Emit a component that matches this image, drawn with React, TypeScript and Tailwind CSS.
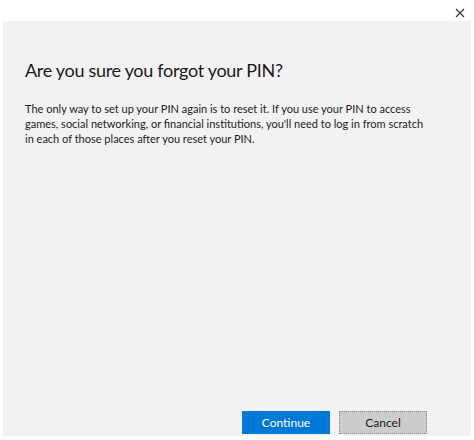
import React from 'react';

const FONT = { fontFamily: 'Lato, "Open Sans", "Liberation Sans", sans-serif' };

const CloseIcon: React.FC = () => (
    <svg width="10" height="10" viewBox="0 0 10 10" className="block">
        <path d="M1 1 L9 9 M9 1 L1 9" stroke="#333" strokeWidth="1.1" fill="none" />
    </svg>
);

const App: React.FC = () => {
    return (
        <div className="w-[474px] h-[440px] bg-white flex flex-col overflow-hidden" style={FONT}>
            <div className="h-[21px] flex justify-end items-center pr-[9px] pt-[4px]">
                <CloseIcon />
            </div>
            <div className="flex-1 mx-[3px] mb-[4px] bg-[#f2f2f2] flex flex-col px-[22px]">
                <h1 className="mt-[37px] text-[18px] leading-[24px] font-normal tracking-[-0.3px] text-[#1a1a1a]">
                    Are you sure you forgot your PIN?
                </h1>
                <p className="mt-[19px] text-[11px] leading-[15px] text-[#222] w-[404px]">
                    The only way to set up your PIN again is to reset it. If you use your PIN to access games, social networking, or financial institutions, you'll need to log in from scratch in each of those places after you reset your PIN.
                </p>
                <div className="mt-auto mb-[2px] flex justify-end gap-[9px] pr-[22px]">
                    <button className="w-[88px] h-[23px] bg-[#0078d7] text-white text-[12px]">
                        Continue
                    </button>
                    <button className="w-[88px] h-[23px] bg-[#cccccc] text-[#1a1a1a] text-[12px] border border-dotted border-[#888]">
                        Cancel
                    </button>
                </div>
            </div>
        </div>
    );
};

export default App;
